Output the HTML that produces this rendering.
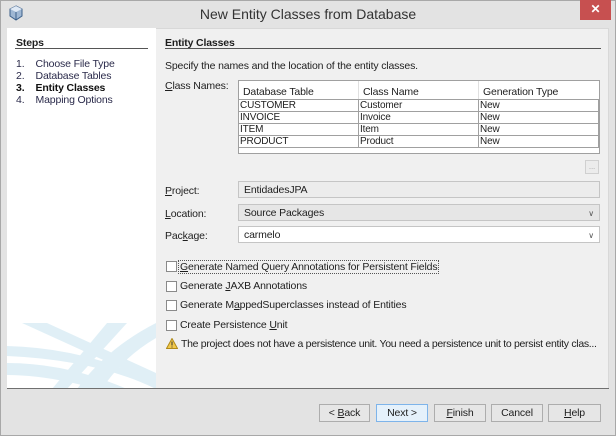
<!DOCTYPE html>
<html><head><meta charset="utf-8"><style>
*{margin:0;padding:0;box-sizing:border-box}
body{width:616px;height:436px;background:#cfcfcf;font-family:"Liberation Sans",sans-serif;font-size:10.5px;letter-spacing:-0.15px;color:#1e1e1e;position:relative;overflow:hidden}
.a{position:absolute;white-space:nowrap}
.win{position:absolute;left:0;top:0;width:616px;height:436px;background:#e3e3e3;border:1px solid #a8a8a8}
.u{text-decoration:underline}
.field{position:absolute;height:17px;border:1px solid #c5c5c5;padding:2px 5px;line-height:13px}
.btn{position:absolute;top:404px;height:18px;border:1px solid #adadad;background:#e6e6e6;text-align:center;line-height:16px}
.cb{position:absolute;left:166px;width:11px;height:11px;border:1px solid #8a8a8a;background:#fff}
.td{position:absolute;height:12px;line-height:11px;padding-left:1px;border-right:1px solid #a0a0a0;border-bottom:1px solid #a0a0a0;font-size:10px}
</style></head><body>
<div class="win"></div>
<svg class="a" style="left:9px;top:5px" width="14" height="16" viewBox="0 0 14 16"><path d="M7 1 L13 4 L13 11 L7 15 L1 11 L1 4Z" fill="#9fb7d3" stroke="#3b5f8a"/><path d="M7 1 L13 4 L7 7 L1 4Z" fill="#dfe9f5"/><path d="M7 7 L7 15" stroke="#3b5f8a"/></svg>
<div class="a" style="left:0;width:616px;top:6px;text-align:center;font-size:14px;letter-spacing:0;color:#333">New Entity Classes from Database</div>
<div class="a" style="left:580px;top:0;width:31px;height:20px;background:#c75050;color:#fff;text-align:center;font-weight:bold;font-size:12px;line-height:19px">✕</div>
<div class="a" style="left:7px;top:28px;width:602px;height:361px;background:#f0f0f0;border:1px solid #d8d8d8"></div>
<div class="a" style="left:7px;top:28px;width:149px;height:361px;background:#fff;overflow:hidden">
<svg width="149" height="361" style="position:absolute;left:0;top:0"><g fill="#d9ecf5" opacity=".8"><path d="M0 318 Q80 320 149 355 L149 361 Q90 332 0 328Z"/><path d="M15 295 L40 295 L149 345 L149 356Z"/><path d="M70 361 Q100 320 149 295 L149 310 Q115 330 95 361Z"/><path d="M0 335 Q60 335 120 361 L90 361 Q40 347 0 347Z"/><path d="M100 295 L120 295 L60 361 L45 361Z"/></g></svg>
</div>
<div class="a" style="left:16px;top:37px;font-weight:bold">Steps</div>
<div class="a" style="left:15px;top:48px;width:133px;height:1px;background:#555"></div>
<div class="a" style="left:16px;top:58px;line-height:12px;color:#2a2a4a">1.&nbsp;&nbsp;&nbsp; Choose File Type<br>2.&nbsp;&nbsp;&nbsp; Database Tables<br><b style="color:#111">3.&nbsp;&nbsp;&nbsp; Entity Classes</b><br>4.&nbsp;&nbsp;&nbsp; Mapping Options</div>
<div class="a" style="left:165px;top:37px;font-weight:bold">Entity Classes</div>
<div class="a" style="left:165px;top:48px;width:436px;height:1px;background:#555"></div>
<div class="a" style="left:165px;top:60px">Specify the names and the location of the entity classes.</div>
<div class="a" style="left:165px;top:80px"><span class="u">C</span>lass Names:</div>
<div class="a" style="left:238px;top:80px;width:362px;height:74px;background:#fff;border:1px solid #a0a0a0"></div>
<div class="a" style="left:243px;top:86px">Database Table</div>
<div class="a" style="left:363px;top:86px">Class Name</div>
<div class="a" style="left:483px;top:86px">Generation Type</div>
<div class="a" style="left:358px;top:81px;width:1px;height:18px;background:#e0e0e0"></div>
<div class="a" style="left:478px;top:81px;width:1px;height:18px;background:#e0e0e0"></div>
<div class="a" style="left:239px;top:99px;width:360px;height:50px;border-top:1px solid #a0a0a0">
<div class="td" style="left:0;top:0;width:120px">CUSTOMER</div><div class="td" style="left:120px;top:0;width:120px">Customer</div><div class="td" style="left:240px;top:0;width:120px">New</div>
<div class="td" style="left:0;top:12px;width:120px">INVOICE</div><div class="td" style="left:120px;top:12px;width:120px">Invoice</div><div class="td" style="left:240px;top:12px;width:120px">New</div>
<div class="td" style="left:0;top:24px;width:120px">ITEM</div><div class="td" style="left:120px;top:24px;width:120px">Item</div><div class="td" style="left:240px;top:24px;width:120px">New</div>
<div class="td" style="left:0;top:36px;width:120px">PRODUCT</div><div class="td" style="left:120px;top:36px;width:120px">Product</div><div class="td" style="left:240px;top:36px;width:120px">New</div>
</div>
<div class="a" style="left:585px;top:160px;width:14px;height:14px;border:1px solid #d0d0d0;background:#ececec;color:#aaa;font-size:8px;text-align:center;line-height:12px">...</div>
<div class="a" style="left:165px;top:185px"><span class="u">P</span>roject:</div>
<div class="field" style="left:238px;top:181px;width:362px;background:#ececec">EntidadesJPA</div>
<div class="a" style="left:165px;top:208px"><span class="u">L</span>ocation:</div>
<div class="field" style="left:238px;top:204px;width:362px;background:#e6e6e6">Source Packages<span style="position:absolute;right:5px;font-size:8px;color:#555">&#8744;</span></div>
<div class="a" style="left:165px;top:230px">Pac<span class="u">k</span>age:</div>
<div class="field" style="left:238px;top:226px;width:362px;background:#fff">carmelo<span style="position:absolute;right:5px;font-size:8px;color:#555">&#8744;</span></div>
<div class="cb" style="top:261px"></div><div class="a" style="left:178px;top:260px;border:1px dotted #555;padding:0 1px"><span class="u">G</span>enerate Named Query Annotations for Persistent Fields</div>
<div class="cb" style="top:281px"></div><div class="a" style="left:180px;top:280px">Generate <span class="u">J</span>AXB Annotations</div>
<div class="cb" style="top:300px"></div><div class="a" style="left:180px;top:299px">Generate M<span class="u">a</span>ppedSuperclasses instead of Entities</div>
<div class="cb" style="top:320px"></div><div class="a" style="left:180px;top:319px">Create Persistence <span class="u">U</span>nit</div>
<svg class="a" style="left:166px;top:338px" width="12" height="11"><path d="M6 0.5 L11.5 10.5 L0.5 10.5Z" fill="#f2c94c" stroke="#b08a1a"/><path d="M6 3.5V7.5M6 8.5V9.5" stroke="#333"/></svg>
<div class="a" style="left:181px;top:338px;width:420px;overflow:hidden;letter-spacing:-0.3px">The project does not have a persistence unit. You need a persistence unit to persist entity clas...</div>
<div class="a" style="left:7px;top:388px;width:602px;height:1px;background:#707070"></div>
<div class="btn" style="left:319px;width:51px">&lt; <span class="u">B</span>ack</div>
<div class="btn" style="left:376px;width:52px;border-color:#7eb4ea;background:#e5f1fb">Next &gt;</div>
<div class="btn" style="left:434px;width:52px"><span class="u">F</span>inish</div>
<div class="btn" style="left:491px;width:52px">Cancel</div>
<div class="btn" style="left:548px;width:53px"><span class="u">H</span>elp</div>
</body></html>
